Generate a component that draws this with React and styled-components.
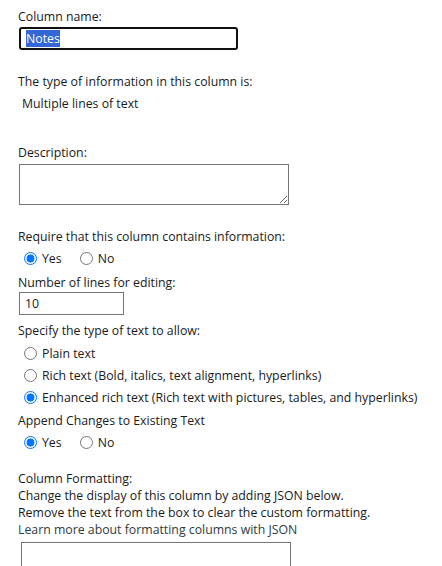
import React from "react";
import styled, { createGlobalStyle } from "styled-components";

const Global = createGlobalStyle`
  html, body { margin: 0; padding: 0; background: #fff; }
  body { font-family: "Open Sans", "Noto Sans", sans-serif; font-size: 12.3px; color: #1a1a1a; }
`;

const Page = styled.div`
  padding: 8px 0 0 18px;
  width: 424px;
  height: 558px;
  overflow: hidden;
`;

const Label = styled.div`
  line-height: 17px;
  margin-top: ${(p) => p.$mt || 0}px;
`;

const Value = styled.div`
  line-height: 17px;
  margin-top: ${(p) => p.$mt || 0}px;
  padding-left: 4px;
`;

const TextInput = styled.input`
  display: block;
  box-sizing: border-box;
  margin: ${(p) => p.$mt || 0}px 0 0 1px;
  width: ${(p) => p.$w}px;
  height: 23px;
  font: inherit;
  color: #1a1a1a;
  padding: 0 5px;
  border: ${(p) => (p.$focused ? "2px solid #111" : "1px solid #767676")};
  border-radius: ${(p) => (p.$focused ? "3px" : "0")};
  outline: none;
  background: #fff;
  &::selection { background: #3367d6; color: #fff; }
`;

const Area = styled.textarea`
  display: block;
  box-sizing: border-box;
  margin: ${(p) => p.$mt || 0}px 0 0 ${(p) => p.$ml || 1}px;
  width: 270px;
  height: ${(p) => p.$h}px;
  border: 1px solid #767676;
  font: inherit;
  resize: ${(p) => (p.$noResize ? "none" : "both")};
  outline: none;
`;

const RadioGroup = styled.div`
  display: flex;
  flex-direction: ${(p) => (p.$column ? "column" : "row")};
  gap: ${(p) => (p.$column ? 0 : 18)}px;
  margin: ${(p) => p.$mt || 0}px 0 ${(p) => p.$mb || 0}px;
  padding-left: 6px;
`;

const Option = styled.label`
  display: flex;
  align-items: center;
  gap: 5px;
  height: 22px;
  white-space: nowrap;
  input {
    margin: 0;
    width: 13px;
    height: 13px;
    accent-color: #0075ff;
  }
`;

const Link = styled.a`
  color: #2f3b3b;
  text-decoration: none;
  line-height: 17px;
  display: block;
`;

export default function App() {
  const ref = React.useRef(null);
  React.useEffect(() => {
    if (ref.current) {
      ref.current.focus();
      ref.current.select();
    }
  }, []);
  return (
    <Page>
      <Global />
      <Label>Column name:</Label>
      <TextInput ref={ref} $w={219} $mt={2} $focused defaultValue="Notes" />
      <Label $mt={23}>The type of information in this column is:</Label>
      <Value $mt={5}>Multiple lines of text</Value>
      <Label $mt={32}>Description:</Label>
      <Area $h={41} $mt={3} />
      <Label $mt={23}>Require that this column contains information:</Label>
      <RadioGroup $mt={2} $mb={5}>
        <Option><input type="radio" name="req" defaultChecked />Yes</Option>
        <Option><input type="radio" name="req" />No</Option>
      </RadioGroup>
      <Label>Number of lines for editing:</Label>
      <TextInput $w={105} $mt={1} defaultValue="10" />
      <Label $mt={7}>Specify the type of text to allow:</Label>
      <RadioGroup $column $mt={3} $mb={4}>
        <Option><input type="radio" name="t" />Plain text</Option>
        <Option><input type="radio" name="t" />Rich text (Bold, italics, text alignment, hyperlinks)</Option>
        <Option><input type="radio" name="t" defaultChecked />Enhanced rich text (Rich text with pictures, tables, and hyperlinks)</Option>
      </RadioGroup>
      <Label>Append Changes to Existing Text</Label>
      <RadioGroup $mt={2} $mb={17}>
        <Option><input type="radio" name="app" defaultChecked />Yes</Option>
        <Option><input type="radio" name="app" />No</Option>
      </RadioGroup>
      <Label>Column Formatting:</Label>
      <Label>Change the display of this column by adding JSON below.</Label>
      <Label>Remove the text from the box to clear the custom formatting.</Label>
      <Link href="#">Learn more about formatting columns with JSON</Link>
      <Area $h={60} $mt={4} $ml={3} $noResize />
    </Page>
  );
}
